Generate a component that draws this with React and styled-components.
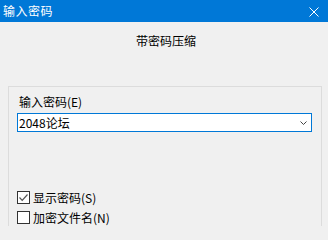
import React from "react";
import styled, { createGlobalStyle } from "styled-components";

const GlobalStyle = createGlobalStyle`
  html, body {
    margin: 0;
    padding: 0;
    background: #f0f0f0;
  }
  body {
    font-family: "Noto Sans CJK SC", "Microsoft YaHei", sans-serif;
  }
`;

const Dialog = styled.div`
  width: 328px;
  height: 226px;
  background: #f0f0f0;
  overflow: hidden;
  display: flex;
  flex-direction: column;
  color: #000;
  font-size: 12px;
`;

const TitleBar = styled.div`
  height: 22px;
  flex: none;
  background: #0078d7;
  color: #fff;
  display: flex;
  align-items: center;
  justify-content: space-between;
  padding: 0 9px 0 3px;
  line-height: 22px;
`;

const Title = styled.span`
  font-size: 12px;
  letter-spacing: 0.5px;
`;

const Close = styled.svg`
  width: 10px;
  height: 10px;
  margin-top: 2px;
`;

const Header = styled.div`
  margin-top: 11px;
  height: 16px;
  line-height: 16px;
  text-align: center;
  font-size: 12px;
  padding-left: 4px;
`;

const Group = styled.div`
  margin: 37px 6px 0 8px;
  flex: 1;
  border: 1px solid #dcdcdc;
  border-bottom: none;
  padding: 7px 9px 0 9px;
  display: flex;
  flex-direction: column;
`;

const Label = styled.div`
  height: 16px;
  line-height: 16px;
  padding-left: 1px;
`;

const Combo = styled.div`
  margin-top: 3px;
  margin-right: 0;
  height: 17px;
  border: 1px solid #0078d7;
  background: #fff;
  display: flex;
  align-items: center;
  justify-content: space-between;
  padding: 0 4px 0 1px;
  margin-left: -1px;
`;

const ComboText = styled.span`
  line-height: 17px;
  font-size: 12px;
`;

const Rows = styled.div`
  margin-top: 55px;
  display: flex;
  flex-direction: column;
`;

const Row = styled.label`
  height: 20px;
  display: flex;
  align-items: center;
  gap: 3px;
  margin-left: -1px;
`;

const Box = styled.span`
  width: 11px;
  height: 11px;
  border: 1px solid #333;
  background: #fff;
  display: flex;
  align-items: center;
  justify-content: center;
`;

const Check = () => (
  <svg width="11" height="11" viewBox="0 0 11 11">
    <path d="M1.5 5.5 L4.2 8.3 L9.5 2.5" fill="none" stroke="#555" strokeWidth="1.2" />
  </svg>
);

const CheckRow = ({ checked, children }) => (
  <Row>
    <Box>{checked && <Check />}</Box>
    <span>{children}</span>
  </Row>
);

export default function App() {
  return (
    <>
      <GlobalStyle />
      <Dialog>
        <TitleBar>
          <Title>输入密码</Title>
          <Close viewBox="0 0 10 10">
            <path d="M0.5 0.5 L9.5 9.5 M9.5 0.5 L0.5 9.5" stroke="#fff" strokeWidth="1" />
          </Close>
        </TitleBar>
        <Header>带密码压缩</Header>
        <Group>
          <Label>输入密码(E)</Label>
          <Combo>
            <ComboText>2048论坛</ComboText>
            <svg width="7" height="4" viewBox="0 0 7 4">
              <path d="M0.5 0.5 L3.5 3.5 L6.5 0.5" fill="none" stroke="#444" strokeWidth="1" />
            </svg>
          </Combo>
          <Rows>
            <CheckRow checked>显示密码(S)</CheckRow>
            <CheckRow>加密文件名(N)</CheckRow>
          </Rows>
        </Group>
      </Dialog>
    </>
  );
}
